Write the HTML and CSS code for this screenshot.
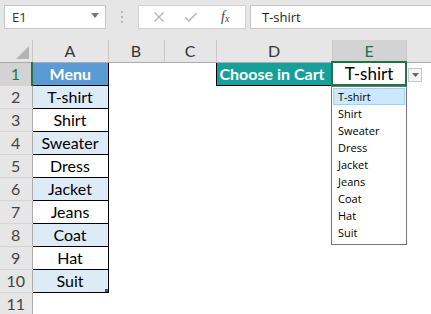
FILE: index.html
```html
<!DOCTYPE html>
<html lang="en">
<head>
    <meta charset="UTF-8">
    <title>Choose in Cart</title>
    <link rel="stylesheet" href="styles.css">
</head>
<body>
    <div class="toolbar">
        <div class="namebox">
            <span>E1</span>
            <svg class="caret" width="8" height="5" viewBox="0 0 8 5"><path d="M0 0h8L4 5z" fill="#777"/></svg>
        </div>
        <div class="grip"><i></i><i></i><i></i></div>
        <div class="fx-buttons">
            <svg width="12" height="12" viewBox="0 0 12 12"><path d="M1.5 1.5l9 9M10.5 1.5l-9 9" stroke="#b3b3b3" stroke-width="1.3"/></svg>
            <svg width="14" height="12" viewBox="0 0 14 12"><path d="M1.5 6.5l3.5 3.5 7.5-8" stroke="#b3b3b3" stroke-width="1.4" fill="none"/></svg>
            <span class="fx">f<sub>x</sub></span>
        </div>
        <div class="formula">T-shirt</div>
    </div>

    <div class="sheet">
        <table>
            <colgroup>
                <col class="c-head"><col class="c-a"><col class="c-b"><col class="c-c"><col class="c-d"><col class="c-e"><col>
            </colgroup>
            <tr class="hrow">
                <th class="corner"><span class="tri"></span></th>
                <th>A</th><th>B</th><th>C</th><th>D</th><th class="sel">E</th><th class="rest"></th>
            </tr>
            <tr><th class="rh sel">1</th><td class="menu">Menu</td><td></td><td></td><td class="cart">Choose in Cart</td><td class="active">T-shirt</td><td></td></tr>
            <tr><th class="rh">2</th><td class="item alt">T-shirt</td><td></td><td></td><td></td><td></td><td></td></tr>
            <tr><th class="rh">3</th><td class="item">Shirt</td><td></td><td></td><td></td><td></td><td></td></tr>
            <tr><th class="rh">4</th><td class="item alt">Sweater</td><td></td><td></td><td></td><td></td><td></td></tr>
            <tr><th class="rh">5</th><td class="item">Dress</td><td></td><td></td><td></td><td></td><td></td></tr>
            <tr><th class="rh">6</th><td class="item alt">Jacket</td><td></td><td></td><td></td><td></td><td></td></tr>
            <tr><th class="rh">7</th><td class="item">Jeans</td><td></td><td></td><td></td><td></td><td></td></tr>
            <tr><th class="rh">8</th><td class="item alt">Coat</td><td></td><td></td><td></td><td></td><td></td></tr>
            <tr><th class="rh">9</th><td class="item">Hat</td><td></td><td></td><td></td><td></td><td></td></tr>
            <tr><th class="rh">10</th><td class="item alt last">Suit<span class="mark"></span></td><td></td><td></td><td></td><td></td><td></td></tr>
            <tr><th class="rh">11</th><td></td><td></td><td></td><td></td><td></td><td></td></tr>
        </table>

        <div class="drop-btn">
            <svg width="7" height="4" viewBox="0 0 7 4"><path d="M0 0h7L3.5 4z" fill="#666"/></svg>
        </div>
        <ul class="drop-list">
            <li class="hl">T-shirt</li>
            <li>Shirt</li>
            <li>Sweater</li>
            <li>Dress</li>
            <li>Jacket</li>
            <li>Jeans</li>
            <li>Coat</li>
            <li>Hat</li>
            <li>Suit</li>
        </ul>
    </div>
</body>
</html>
```

FILE: styles.css
```css
body {
    margin: 0;
    width: 431px;
    height: 314px;
    overflow: hidden;
    background-color: #ffffff;
    font-family: "Open Sans", "Noto Sans", sans-serif;
    color: #000;
}
.toolbar {
    height: 40px;
    background-color: #e6e6e6;
    display: flex;
    align-items: flex-start;
    padding: 5px 0 0 4px;
    box-sizing: border-box;
}
.namebox {
    width: 102px;
    height: 24px;
    box-sizing: border-box;
    background-color: #fff;
    border: 1px solid #c6c6c6;
    display: flex;
    align-items: center;
    justify-content: space-between;
    padding: 0 6px 0 7px;
    font-size: 13px;
    color: #333;
}
.caret {
    margin-top: -3px;
}
.grip {
    width: 32px;
    height: 24px;
    display: flex;
    flex-direction: column;
    align-items: center;
    justify-content: center;
    gap: 3px;
}
.grip i {
    display: block;
    width: 2px;
    height: 2px;
    background-color: #b8b8b8;
}
.fx-buttons {
    width: 108px;
    height: 24px;
    box-sizing: border-box;
    background-color: #fff;
    border: 1px solid #d4d4d4;
    display: flex;
    align-items: center;
    padding: 0 0 0 14px;
    gap: 19px;
}
.fx {
    font-family: "Liberation Serif", serif;
    font-style: italic;
    font-size: 14px;
    color: #444;
    margin-left: 4px;
}
.fx sub {
    font-size: 10px;
    vertical-align: -1px;
}
.formula {
    flex: 1;
    margin-left: 4px;
    height: 24px;
    box-sizing: border-box;
    background-color: #fff;
    border: 1px solid #c6c6c6;
    border-right: none;
    padding-left: 11px;
    line-height: 22px;
    font-size: 13px;
    color: #222;
}
.sheet {
    position: relative;
}
table {
    border-collapse: collapse;
    table-layout: fixed;
    width: 431px;
    font-family: Lato, "Open Sans", sans-serif;
}
.c-head { width: 32px; }
.c-a { width: 76px; }
.c-b { width: 56px; }
.c-c { width: 52px; }
.c-d { width: 116px; }
.c-e { width: 74px; }
tr {
    height: 23px;
}
tr.hrow {
    height: 22px;
}
th, td {
    padding: 0;
    font-weight: normal;
    font-size: 16px;
    text-align: center;
    white-space: nowrap;
    overflow: hidden;
}
.hrow th {
    background-color: #e6e6e6;
    border-right: 1px solid #c8c8c8;
    border-bottom: 1px solid #ababab;
    color: #333;
    font-size: 16px;
}
.hrow th.rest {
    border-right: none;
}
.hrow th.sel {
    background-color: #d3d3d3;
    color: #217346;
    border-bottom: 2px solid #217346;
}
.corner {
    position: relative;
}
.tri {
    position: absolute;
    right: 3px;
    bottom: 3px;
    width: 0;
    height: 0;
    border-left: 13px solid transparent;
    border-bottom: 13px solid #b4b4b4;
}
.rh {
    background-color: #e6e6e6;
    border-right: 1px solid #ababab;
    border-bottom: 1px solid #d4d4d4;
    color: #444;
    font-size: 16px;
}
.rh.sel {
    background-color: #d3d3d3;
    color: #217346;
    border-right: 2px solid #217346;
}
.menu {
    background-color: #5b9bd5;
    color: #fff;
    font-weight: bold;
    border: 1px solid #000;
}
.item {
    border: 1px solid #000;
    background-color: #fff;
}
.item.alt {
    background-color: #ddebf7;
}
.item.last {
    position: relative;
}
.mark {
    position: absolute;
    right: 0;
    bottom: 0;
    width: 3px;
    height: 3px;
    background-color: #3b4f8c;
}
.cart {
    background-color: #17a09a;
    color: #fff;
    font-weight: bold;
    text-align: left;
    padding-left: 3px;
    border: 1px solid #000;
}
.active {
    border: 2px solid #217346;
    font-size: 17px;
}
.drop-btn {
    position: absolute;
    left: 408px;
    top: 28px;
    width: 14px;
    height: 14px;
    box-sizing: border-box;
    border: 1px solid #c8c8c8;
    background-color: #f4f4f4;
    display: flex;
    align-items: center;
    justify-content: center;
}
.drop-list {
    position: absolute;
    left: 331px;
    top: 46px;
    width: 76px;
    box-sizing: border-box;
    margin: 0;
    padding: 1px 1px 3px;
    list-style: none;
    background-color: #fff;
    border: 1px solid #767676;
    font-family: "Open Sans", sans-serif;
    font-size: 11px;
}
.drop-list li {
    height: 17px;
    line-height: 17px;
    padding-left: 5px;
}
.drop-list li.hl {
    background-color: #cce8ff;
    border: 1px solid #99d1ff;
    height: 15px;
    line-height: 15px;
    padding-left: 4px;
}
```
